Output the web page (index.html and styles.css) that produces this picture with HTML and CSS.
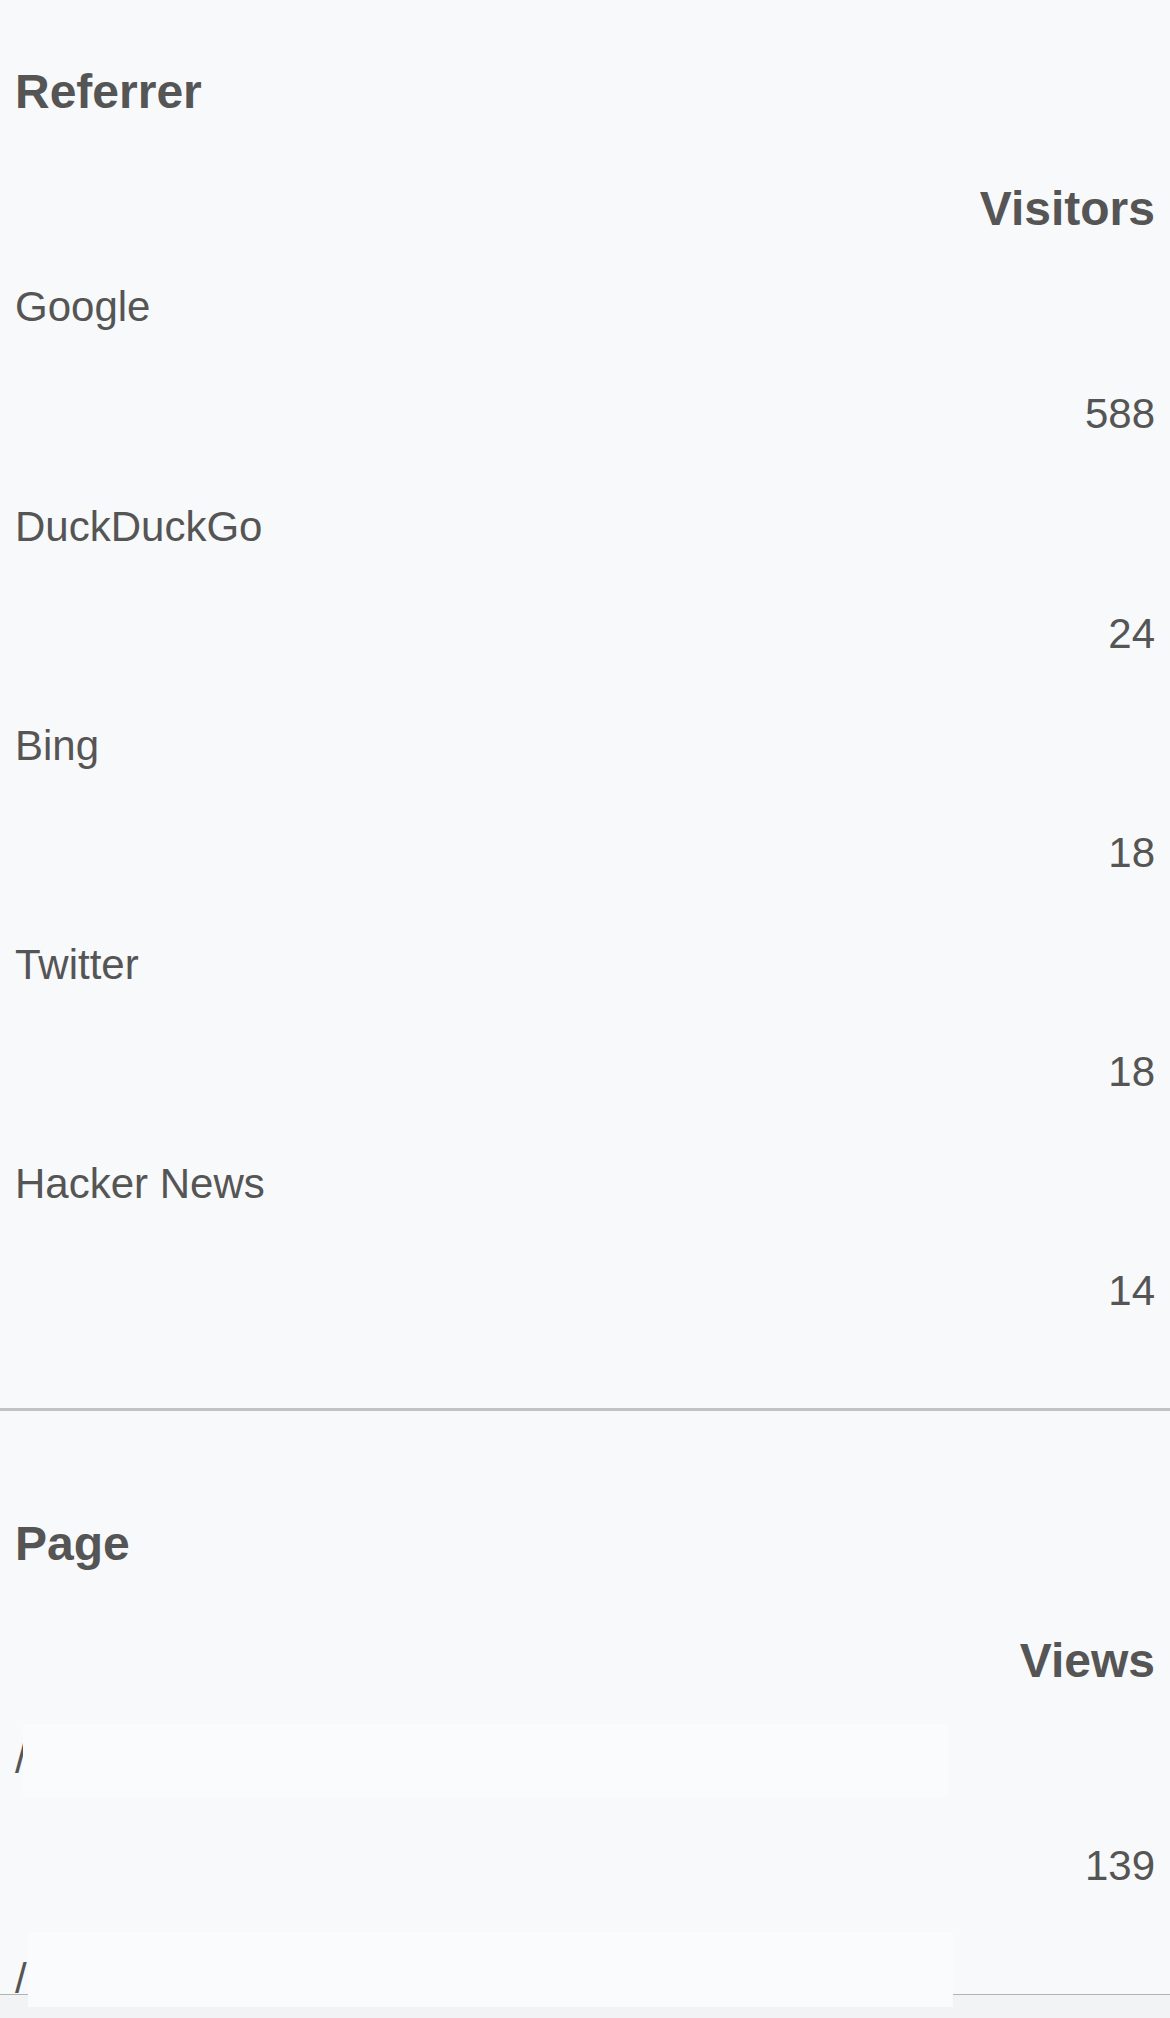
FILE: index.html
```html
<!DOCTYPE html>
<html lang="en">
<head>
<meta charset="utf-8">
<title>Stats</title>
<link rel="stylesheet" href="styles.css">
</head>
<body>
<main class="page">
  <section class="panel panel-first">
    <h2 class="panel-title">Referrer</h2>
    <div class="table">
      <div class="thead"><div class="th">Visitors</div></div>
      <div class="tr"><div class="td name">Google</div><div class="td num">588</div></div>
      <div class="tr"><div class="td name">DuckDuckGo</div><div class="td num">24</div></div>
      <div class="tr"><div class="td name">Bing</div><div class="td num">18</div></div>
      <div class="tr"><div class="td name">Twitter</div><div class="td num">18</div></div>
      <div class="tr"><div class="td name">Hacker News</div><div class="td num">14</div></div>
    </div>
  </section>
  <hr class="divider">
  <section class="panel panel-second">
    <h2 class="panel-title">Page</h2>
    <div class="table">
      <div class="thead"><div class="th">Views</div></div>
      <div class="tr"><div class="td name">/<span class="redact redact-a"></span></div><div class="td num">139</div></div>
      <div class="tr"><div class="td name">/<span class="redact redact-b"></span></div></div>
    </div>
  </section>
</main>
<div class="toolbar"></div>
</body>
</html>
```

FILE: styles.css
```css
html, body {
  margin: 0;
  padding: 0;
  background: #f8f9fa;
}

body {
  font-family: "Liberation Sans", Arial, Helvetica, sans-serif;
  color: #555555;
}

.page {
  display: flex;
  flex-direction: column;
}

.panel-first {
  padding-top: 63.4px;
}

.panel-second {
  padding-top: 103.9px;
}

.panel-title {
  margin: 0;
  padding: 0 15px;
  font-size: 48px;
  line-height: 58px;
  font-weight: 700;
  color: #555555;
}

.table {
  display: flex;
  flex-direction: column;
}

.thead {
  margin-top: 59px;
  margin-bottom: 44.1px;
}

.th {
  padding: 0 15px;
  font-size: 48px;
  line-height: 58px;
  font-weight: 700;
  text-align: right;
}

.tr {
  display: flex;
  flex-direction: column;
  padding-bottom: 62.25px;
}

.td {
  padding: 0 15px;
  font-size: 42px;
  line-height: 50px;
}

.name {
  position: relative;
}

.num {
  margin-top: 57px;
  text-align: right;
}

.divider {
  margin: 29.75px 0 0;
  border: 0;
  height: 3px;
  background: #c1c2c4;
}

.redact {
  position: absolute;
  z-index: 2;
  background: #fafbfc;
  width: 925px;
}

.redact-a {
  left: 23px;
  top: -10.5px;
  height: 74px;
}

.redact-b {
  left: 28px;
  top: -21.75px;
  height: 75px;
}

.toolbar {
  position: fixed;
  z-index: 1;
  left: 0;
  right: 0;
  bottom: 0;
  height: 23px;
  border-top: 1px solid #b3b3b3;
  background: #f2f3f4;
}
```
